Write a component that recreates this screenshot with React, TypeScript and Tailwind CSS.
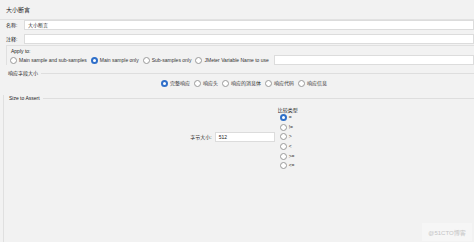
const font = {
  fontFamily: '"Liberation Sans", "Noto Sans CJK SC", sans-serif',
};

function Radio({ checked, label }: { checked?: boolean; label: string }) {
  return (
    <div className="flex items-center gap-[2px]">
      {checked ? (
        <span className="w-[7px] h-[7px] rounded-full border-[2px] border-[#2f6fc9] bg-white" />
      ) : (
        <span className="w-[7px] h-[7px] rounded-full border border-[#9a9a9a] bg-white" />
      )}
      <span className="text-[5px] leading-[7px] text-[#333]">{label}</span>
    </div>
  );
}

export default function App() {
  return (
    <div
      className="relative w-[474px] h-[242px] bg-[#f2f2f2] overflow-hidden text-[#222] flex flex-col"
      style={font}
    >
      {/* title */}
      <div className="h-[20px] flex items-center pl-[6px] border-b border-[#e2e2e2]">
        <span className="text-[6px] leading-[8px]">大小断言</span>
      </div>

      {/* name */}
      <div className="h-[11px] flex items-center mt-[-1px]">
        <span className="w-[24px] pl-[6px] text-[5px] leading-[6px]">名称:</span>
        <div className="flex-1 h-[10px] bg-white border border-[#dcdcdc] flex items-center pl-[3px]">
          <span className="text-[5px] leading-[6px]">大小断言</span>
        </div>
      </div>

      {/* comment */}
      <div className="h-[11px] flex items-center mt-[3px]">
        <span className="w-[24px] pl-[6px] text-[5px] leading-[6px]">注释:</span>
        <div className="flex-1 h-[10px] bg-white border border-[#dcdcdc]" />
      </div>

      {/* apply to */}
      <div className="ml-[6px] border-t border-l border-[#e0e0e0] mt-[1px] pl-[4px] flex flex-col">
        <span className="text-[5px] leading-[8px] mt-[1px]">Apply to:</span>
        <div className="flex items-center h-[10px] gap-[4px] ml-[-1px]">
          <Radio label="Main sample and sub-samples" />
          <Radio checked label="Main sample only" />
          <Radio label="Sub-samples only" />
          <Radio label="JMeter Variable Name to use" />
          <div className="flex-1 h-[10px] bg-white border border-[#dcdcdc] ml-[1px]" />
        </div>
      </div>

      {/* response field */}
      <div className="flex items-center h-[8px] mt-[4px] pl-[8px]">
        <span className="text-[5px] leading-[6px]">响应字段大小</span>
        <div className="flex-1 h-px bg-[#dedede] ml-[3px]" />
      </div>
      <div className="flex items-center justify-center gap-[4px] h-[10px] mt-[1px] pl-[14px]">
        <Radio checked label="完整响应" />
        <Radio label="响应头" />
        <Radio label="响应的消息体" />
        <Radio label="响应代码" />
        <Radio label="响应信息" />
      </div>

      {/* size to assert */}
      <div className="flex-1 flex flex-col mt-[7px] ml-[3px] border-l border-[#e0e0e0]">
        <div className="flex items-center h-[6px] pl-[5px]">
          <span className="text-[5px] leading-[6px]">Size to Assert</span>
          <div className="flex-1 h-px bg-[#dedede] ml-[3px]" />
        </div>
        <div className="flex items-center justify-center mt-[4px] pl-[10px]">
          <div className="flex items-center">
            <span className="text-[5px] leading-[6px] mr-[3px]">字节大小:</span>
            <div className="w-[60px] h-[10px] bg-white border border-[#dcdcdc] flex items-center pl-[3px]">
              <span className="text-[5px] leading-[6px]">512</span>
            </div>
          </div>
          <div className="flex flex-col ml-[5px] mt-[2px]">
            <span className="text-[5px] leading-[6px] ml-[-2px]">比较类型</span>
            <div className="flex flex-col gap-[2.7px] mt-[1px]">
              <Radio checked label="=" />
              <Radio label="!=" />
              <Radio label=">" />
              <Radio label="<" />
              <Radio label=">=" />
              <Radio label="<=" />
            </div>
          </div>
        </div>
      </div>

      {/* watermark */}
      <div className="absolute right-[2px] bottom-[1px] w-[50px] h-[18px] bg-[#f6f6f6] flex items-end justify-center pb-[4px]">
        <span className="text-[6px] leading-[7px] text-[#c4c4c4]">@51CTO博客</span>
      </div>
    </div>
  );
}
